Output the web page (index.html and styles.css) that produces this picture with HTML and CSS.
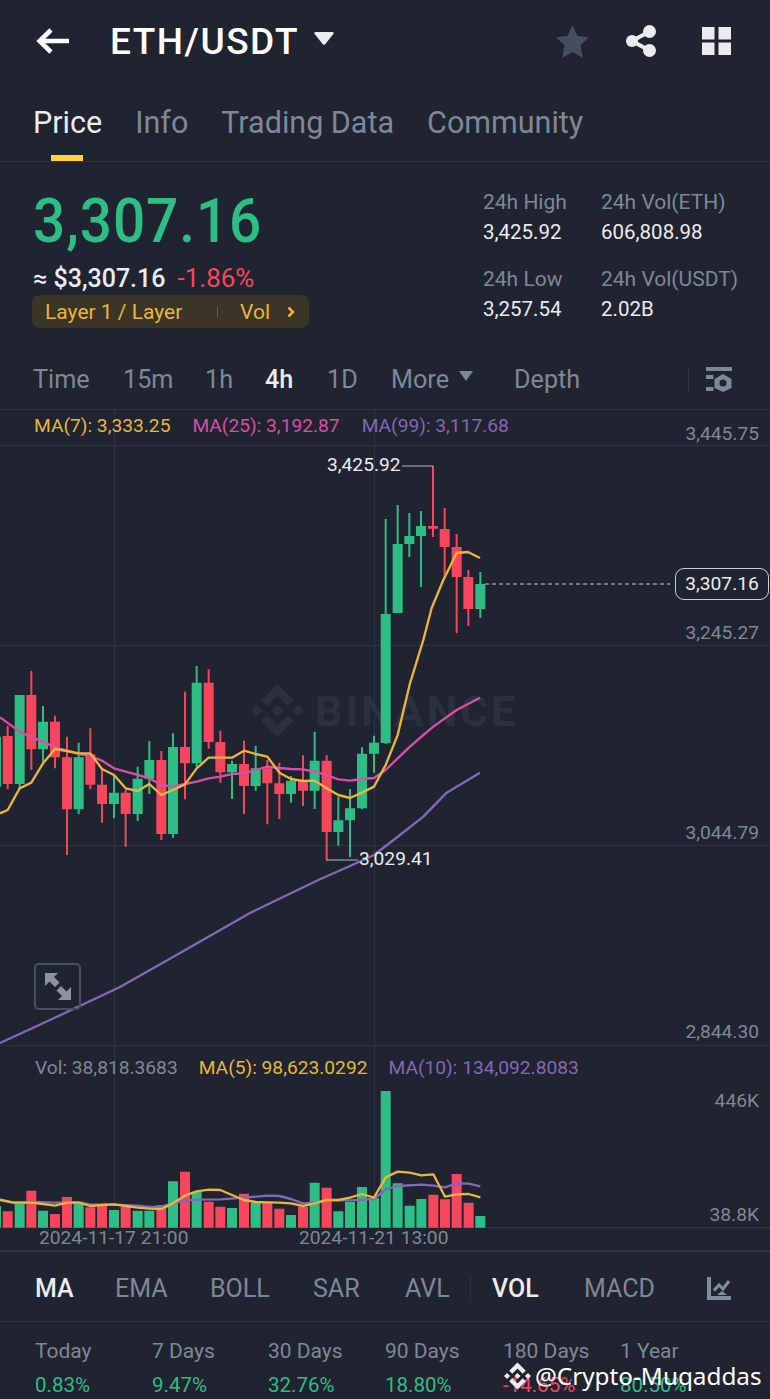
FILE: index.html
```html
<!DOCTYPE html>
<html lang="en">
  <head>
    <meta charset="UTF-8" />
    <meta name="viewport" content="width=device-width, initial-scale=1.0" />
    <title>ETH/USDT</title>
    <link rel="stylesheet" href="styles.css">
  </head>
  <body>
    <header class="top-bar">
      <svg class="back-icon" viewBox="0 0 34 26"><path d="M33 13H4M15 2 3.500 13 15 24"/></svg>
      <h1>ETH/USDT</h1>
      <svg class="caret-icon" viewBox="0 0 20 13"><path d="M1.500 0h17c1 0 1.500 1 1 1.800l-8.300 10.400c-.6.8-1.800.8-2.400 0L.5 1.800C0 1 .5 0 1.500 0z"/></svg>
      <div class="top-actions">
        <svg class="star-icon" viewBox="0 0 32 32"><path d="M16 0l4.800 10.600 11.200 1.200-8.300 7.800 2.300 12.400-10-5.900-10 5.900 2.300-12.400L0 11.800l11.200-1.200z"/></svg>
        <svg class="share-icon" viewBox="0 0 30 32"><circle cx="23.500" cy="6.500" r="6.500"/><circle cx="6" cy="16" r="6"/><circle cx="23.500" cy="25.500" r="6.500"/><path d="M23.500 6.500 6 16l17.500 9.500"/></svg>
        <svg class="grid-icon" viewBox="0 0 29 28"><path d="M0 0h12.500v12.500H0zM16.500 0H29v12.500H16.500zM0 15.500h12.500V28H0zM16.500 15.500H29V28H16.500z"/></svg>
      </div>
    </header>

    <nav class="tabs">
      <a class="tab active">Price</a>
      <a class="tab">Info</a>
      <a class="tab">Trading Data</a>
      <a class="tab">Community</a>
    </nav>

    <section class="stats">
      <div class="stats-main">
        <div class="last-price">3,307.16</div>
        <div class="fiat-line"><span class="fiat">≈ $3,307.16</span><span class="change">-1.86%</span></div>
        <div class="tag-pill">
          <span class="tag-name">Layer 1 / Layer</span>
          <i class="tag-sep"></i>
          <span>Vol</span>
          <svg class="tag-arrow" viewBox="0 0 8 12"><path d="M1.500 1.500 6 6l-4.500 4.500"/></svg>
        </div>
      </div>
      <dl class="stats-grid">
        <div><dt>24h High</dt><dd>3,425.92</dd></div>
        <div><dt>24h Vol(ETH)</dt><dd>606,808.98</dd></div>
        <div><dt>24h Low</dt><dd>3,257.54</dd></div>
        <div><dt>24h Vol(USDT)</dt><dd>2.02B</dd></div>
      </dl>
    </section>

    <nav class="intervals">
      <a class="interval w-time">Time</a>
      <a class="interval w-15m">15m</a>
      <a class="interval w-1h">1h</a>
      <a class="interval w-4h active">4h</a>
      <a class="interval w-1d">1D</a>
      <a class="interval w-more">More<svg class="more-caret" viewBox="0 0 14 10"><path d="M0 0h14L7 10z"/></svg></a>
      <a class="interval w-depth">Depth</a>
      <i class="interval-sep"></i>
      <svg class="settings-icon" viewBox="0 0 26 25"><path d="M0 0h26v4H0zM0 8h7.500v4H0zM0 20h7.500v4H0z"/><path fill-rule="evenodd" d="M17 7l8.500 5v9L17 25l-8.500-4v-9zM17 12.500a3.500 3.500 0 1 0 0 7 3.500 3.500 0 0 0 0-7z"/></svg>
    </nav>

    <section class="chart">
      <div class="watermark">
        <svg class="watermark-logo" viewBox="0 0 32 32"><path d="M9.800 13.400 16 7.200l6.200 6.200 3.600-3.600L16 0 6.200 9.800zM0 16l3.600-3.600L7.200 16l-3.600 3.600zM9.800 18.600 16 24.800l6.200-6.200 3.600 3.600L16 32l-9.800-9.800zM24.800 16l3.600-3.600L32 16l-3.600 3.600zM19.600 16 16 12.400 12.400 16 16 19.600z"/></svg>
        <span>BINANCE</span>
      </div>

      <svg class="chart-svg" viewBox="0 410 770 840">
        <path class="grid-line" d="M0 445.500H770M0 645.500H770M0 845.500H770M0 1045.500H770M0 1227.500H770M114.500 410V1228M374.500 410V1228"/>

        <!-- candles, drawn at 3x so the numbers stay whole -->
        <g transform="translate(0 640) scale(.33333)">
          <path class="wick up" d="M-12 260V480M59 165V445M129 198V365M236 308V522M342 405V535M413 380V543M448 303V462M519 280V593M590 78V380M696 362V477M767 317V452M873 408V488M944 275V507M1015 470V617M1050 447V652M1086 322V508M1122 287V398M1157 -363V312M1193 -405V-81M1228 -381V-249M1263 -387V-159M1441 -204V-66"/>
          <path class="wick down" d="M23 258V448M94 93V390M165 227V385M201 290V645M271 265V448M306 385V548M377 450V620M484 333V600M555 155V478M626 88V326M661 272V428M732 302V522M802 360V553M838 368V537M909 346V498M980 346V662M1299 -522V-309M1334 -396V-189M1370 -318V-21M1405 -210V-42"/>
          <path class="body up" d="M-12 290V440M59 165V432M129 245V328M236 352V508M342 458V492M413 416V522M448 360V416M519 321V582M590 128V370M696 372V397M767 385V438M873 422V462M944 362V452M1015 541V576M1050 505V541M1086 341V505M1122 308V341M1157 -78V309M1193 -288V-81M1228 -312V-288M1263 -342V-312M1441 -168V-93"/>
          <path class="body down" d="M23 288V432M94 165V328M165 245V352M201 352V508M271 343V434M306 434V492M377 458V522M484 360V582M555 321V370M626 128V306M661 306V397M732 372V438M802 385V430M838 430V462M909 422V452M980 362V576M1299 -342V-334M1334 -333V-279M1370 -279V-189M1405 -189V-93"/>
          <polyline class="ma ma-purple" points="0,1209 150,1140 360,1041 540,939 750,819 955,720 1050,678 1122,645 1200,585 1270,530 1340,458 1440,398"/>
          <polyline class="ma ma-pink" points="0,232 59,275 94,292 129,305 165,322 201,332 236,342 271,348 306,362 342,385 377,395 413,405 448,415 484,435 519,440 555,432 590,425 626,415 661,410 696,402 732,400 767,390 802,380 838,384 873,387 909,388 944,395 980,405 1015,418 1050,422 1086,417 1122,414 1157,390 1193,355 1230,320 1270,285 1300,260 1370,210 1440,173"/>
          <polyline class="ma ma-yellow" points="0,520 23,510 59,445 94,428 129,370 165,327 201,333 236,340 271,340 306,387 342,405 377,445 413,453 448,432 484,465 519,450 555,433 590,385 626,353 661,353 696,353 732,332 767,342 802,350 838,398 873,417 909,423 944,422 980,445 1015,465 1050,474 1086,458 1122,440 1157,375 1193,285 1230,130 1270,0 1295,-96 1330,-180 1370,-261 1404,-264 1440,-246"/>
        </g>

        <path class="leader" d="M402 466H433M327 860H358"/>
        <path class="last-line" d="M485 584H670"/>

        <!-- volume -->
        <g transform="translate(0 1050) scale(.33333)">
          <path class="body up" d="M-12 533V468M59 533V460M129 533V482M236 533V455M342 533V480M413 533V482M448 533V482M519 533V394M590 533V425M696 533V474M767 533V458M873 533V495M944 533V398M1015 533V484M1050 533V455M1086 533V411M1122 533V445M1157 533V123M1193 533V400M1229 533V467M1264 533V447M1441 533V498"/>
          <path class="body down" d="M23 533V484M94 533V422M165 533V492M201 533V441M271 533V472M306 533V468M377 533V470M484 533V465M555 533V365M626 533V455M661 533V470M732 533V431M802 533V455M838 533V476M909 533V470M980 533V413M1300 533V434M1335 533V448M1370 533V372M1406 533V458"/>
          <polyline class="ma ma-purple" points="0,448 40,458 94,456 165,458 236,457 271,463 342,464 413,467 448,471 484,470 519,460 555,452 590,449 661,448 732,443 802,437 838,438 873,447 909,460 944,458 980,451 1050,451 1122,447 1157,418 1193,408 1264,404 1300,407 1335,412 1370,400 1406,401 1441,409"/>
          <polyline class="ma ma-yellow" points="0,450 40,458 94,458 129,462 165,467 201,458 236,458 271,468 306,465 342,463 377,468 413,473 448,476 484,477 519,460 555,437 590,424 626,419 661,420 696,435 732,450 767,456 802,457 838,458 873,460 909,468 944,460 980,450 1015,450 1050,443 1086,432 1122,443 1157,382 1193,365 1229,368 1264,376 1300,373 1335,440 1370,433 1406,432 1441,442"/>
        </g>
      </svg>

      <div class="legend legend-price">
        <span class="c-yellow">MA(7): 3,333.25</span>
        <span class="c-pink">MA(25): 3,192.87</span>
        <span class="c-purple">MA(99): 3,117.68</span>
      </div>
      <div class="legend legend-vol">
        <span class="c-grey">Vol: 38,818.3683</span>
        <span class="c-yellow">MA(5): 98,623.0292</span>
        <span class="c-purple">MA(10): 134,092.8083</span>
      </div>

      <span class="axis-label y-1">3,445.75</span>
      <span class="axis-label y-2">3,245.27</span>
      <span class="axis-label y-3">3,044.79</span>
      <span class="axis-label y-4">2,844.30</span>
      <span class="axis-label y-5">446K</span>
      <span class="axis-label y-6">38.8K</span>

      <span class="peak-label high">3,425.92</span>
      <span class="peak-label low">3,029.41</span>
      <span class="price-tag">3,307.16</span>

      <span class="date-label d-1">2024-11-17 21:00</span>
      <span class="date-label d-2">2024-11-21 13:00</span>

      <button class="expand-btn">
        <svg viewBox="0 0 26 27"><path d="M0 0h13L9 4l5.500 5.500-4.500 4.500L4.500 8.500 0 13zM26 27H13l4-4-5.500-5.500 4.500-4.500 5.500 5.500 4.500-4.500z"/></svg>
      </button>
    </section>

    <nav class="indicators">
      <a class="ind w-ma active">MA</a>
      <a class="ind w-ema">EMA</a>
      <a class="ind w-boll">BOLL</a>
      <a class="ind w-sar">SAR</a>
      <a class="ind w-avl">AVL</a>
      <i class="ind-sep"></i>
      <a class="ind w-vol active">VOL</a>
      <a class="ind w-macd">MACD</a>
      <svg class="ind-icon" viewBox="0 0 24 23"><path d="M0 0h4v19h20v4H0z"/><path d="M7 13.500 12 8l4 4 6-8" class="ind-line"/><path d="M10 18l5-4 5 4z"/></svg>
    </nav>

    <section class="perf">
      <div><span>Today</span><b class="pos">0.83%</b></div>
      <div><span>7 Days</span><b class="pos">9.47%</b></div>
      <div><span>30 Days</span><b class="pos">32.76%</b></div>
      <div><span>90 Days</span><b class="pos">18.80%</b></div>
      <div><span>180 Days</span><b class="neg">-14.65%</b></div>
      <div><span>1 Year</span><b class="pos">80.50%</b></div>
    </section>

    <div class="credit">
      <svg class="credit-logo" viewBox="0 0 32 32"><path d="M9.800 13.400 16 7.200l6.200 6.200 3.600-3.600L16 0 6.200 9.800zM0 16l3.600-3.600L7.200 16l-3.600 3.600zM9.800 18.600 16 24.800l6.200-6.200 3.600 3.600L16 32l-9.800-9.800zM24.800 16l3.600-3.600L32 16l-3.600 3.600zM19.600 16 16 12.400 12.400 16 16 19.600z"/></svg>
      <span>@Crypto-Muqaddas</span>
    </div>
  </body>
</html>
```

FILE: styles.css
```css
* {
  margin: 0;
  padding: 0;
  box-sizing: border-box;
}

:root {
  --bg: #1f2430;
  --line: #2e333e;
  --grey: #7f8796;
  --white: #eaecef;
  --green: #2ebd85;
  --red: #f6465d;
  --yellow: #e9b63b;
  --pink: #d94fa8;
  --purple: #8467b8;
}

body {
  position: relative;
  width: 770px;
  height: 1399px;
  overflow: hidden;
  background-color: var(--bg);
  color: var(--white);
  font-family: Roboto, sans-serif;
}

a {
  display: block;
}

/* Top bar */
.top-bar {
  display: flex;
  align-items: center;
  height: 82px;
  padding-left: 36px;
}

.back-icon {
  width: 34px;
  height: 26px;
  fill: none;
  stroke: #fff;
  stroke-width: 4.5;
}

h1 {
  margin-left: 40px;
  font-size: 37px;
  font-weight: 500;
  letter-spacing: 1.5px;
  color: #fff;
}

.caret-icon {
  width: 20px;
  height: 13px;
  margin-left: 15px;
  margin-top: -6px;
  fill: var(--white);
}

.top-actions {
  display: flex;
  align-items: center;
  margin-left: auto;
  padding-right: 39px;
}

.star-icon {
  width: 33px;
  height: 33px;
  fill: #454e5f;
}

.share-icon {
  width: 30px;
  height: 32px;
  margin-left: 37px;
  fill: var(--white);
  stroke: var(--white);
}

.share-icon circle {
  stroke: none;
}

.share-icon path {
  fill: none;
  stroke-width: 4;
}

.grid-icon {
  width: 29px;
  height: 28px;
  margin-left: 46px;
  fill: var(--white);
}

/* Tabs */
.tabs {
  position: relative;
  display: flex;
  gap: 33px;
  height: 80px;
  padding: 20px 0 0 33px;
  border-bottom: 1px solid var(--line);
}

.tab {
  position: relative;
  height: 59px;
  font-size: 30.5px;
  line-height: 41px;
  color: var(--grey);
}

.tab.active {
  color: var(--white);
}

.tab.active::after {
  content: "";
  position: absolute;
  left: 18px;
  bottom: 0;
  width: 32px;
  height: 6px;
  background-color: #fcd535;
}

/* Price block */
.stats {
  display: flex;
  justify-content: space-between;
  height: 187px;
  padding: 24px 0 0 33px;
}

.last-price {
  height: 70px;
  font-size: 62px;
  line-height: 70px;
  font-weight: 500;
  letter-spacing: 1px;
  color: var(--green);
  transform: scaleX(.915);
  transform-origin: left;
}

.fiat-line {
  display: flex;
  align-items: baseline;
  gap: 12px;
  margin-top: 7px;
  font-size: 25px;
  line-height: 30px;
}

.fiat {
  font-weight: 500;
}

.change {
  font-size: 26px;
  color: var(--red);
}

.tag-pill {
  display: flex;
  align-items: center;
  width: 277px;
  height: 33px;
  margin: 1px 0 0 -1px;
  padding-left: 13px;
  border-radius: 8px;
  background-color: #3a3527;
  font-size: 21px;
  color: var(--yellow);
}

.tag-name {
  width: 172px;
}

.tag-sep {
  width: 1px;
  height: 10px;
  background-color: #6b5f33;
  margin-right: 22px;
}

.tag-arrow {
  width: 8px;
  height: 12px;
  margin-left: 17px;
  fill: none;
  stroke: var(--yellow);
  stroke-width: 2.5;
}

.stats-grid {
  display: grid;
  grid-template-columns: 118px 169px;
  grid-auto-rows: 77px;
  padding-top: 1px;
}

.stats-grid dt {
  font-size: 21px;
  line-height: 30px;
  color: var(--grey);
}

.stats-grid dd {
  font-size: 20.5px;
  line-height: 30px;
  color: var(--white);
}

/* Interval row */
.intervals,
.indicators {
  position: relative;
  display: flex;
  align-items: center;
}

.intervals {
  height: 61px;
  padding-left: 33px;
  border-bottom: 1px solid var(--line);
}

.interval {
  font-size: 25.2px;
  color: var(--grey);
}

.interval.active {
  font-weight: 500;
  color: var(--white);
}

.w-time { width: 90px; }
.w-15m { width: 82px; }
.w-1h { width: 60px; }
.w-4h { width: 62px; }
.w-1d { width: 64px; }
.w-more { width: 123px; display: flex; align-items: center; }
.w-depth { width: 174px; }

.more-caret {
  width: 14px;
  height: 10px;
  margin: -6px 0 0 10px;
  fill: var(--grey);
}

.interval-sep {
  width: 1px;
  height: 25px;
  background-color: var(--line);
}

.settings-icon {
  width: 26px;
  height: 25px;
  margin-left: 17px;
  fill: var(--grey);
}

/* Chart */
.chart {
  position: relative;
  height: 842px;
  border-bottom: 2px solid var(--line);
}

.chart-svg {
  position: relative;
  display: block;
  width: 770px;
  height: 840px;
}

.grid-line {
  fill: none;
  stroke: var(--line);
  stroke-width: 1;
}

.wick,
.body,
.ma {
  fill: none;
}

.wick {
  stroke-width: 6;
}

.body {
  stroke-width: 30;
}

.up {
  stroke: var(--green);
}

.down {
  stroke: var(--red);
}

.ma {
  stroke-width: 7;
  stroke-linejoin: round;
}

.ma-yellow {
  stroke: var(--yellow);
}

.ma-pink {
  stroke: var(--pink);
}

.ma-purple {
  stroke: var(--purple);
}

.leader {
  fill: none;
  stroke: #b4b9c2;
  stroke-width: 1;
}

.last-line {
  fill: none;
  stroke: #c9cdd4;
  stroke-width: 1;
  stroke-dasharray: 4 3;
}

.watermark {
  position: absolute;
  left: 251px;
  top: 274px;
  display: flex;
  align-items: center;
  gap: 11px;
  color: #2b303b;
  font-size: 43px;
  font-weight: 700;
  letter-spacing: 3px;
}

.watermark-logo {
  width: 53px;
  height: 53px;
  fill: #2b303b;
}

.legend {
  position: absolute;
  display: flex;
  font-size: 19.2px;
  line-height: 24px;
}

.legend-price {
  left: 34px;
  top: 4px;
  gap: 22px;
}

.legend-vol {
  left: 35px;
  top: 646px;
  gap: 21px;
}

.c-yellow { color: var(--yellow); }
.c-pink { color: var(--pink); }
.c-purple { color: var(--purple); }
.c-grey { color: var(--grey); }

.axis-label {
  position: absolute;
  right: 11px;
  font-size: 19.2px;
  line-height: 24px;
  color: var(--grey);
}

.y-1 { top: 12px; }
.y-2 { top: 211px; }
.y-3 { top: 411px; }
.y-4 { top: 610px; }
.y-5 { top: 679px; }
.y-6 { top: 793px; }

.peak-label {
  position: absolute;
  font-size: 19.2px;
  line-height: 24px;
  color: var(--white);
}

.high {
  left: 327px;
  top: 43px;
}

.low {
  left: 359px;
  top: 437px;
}

.price-tag {
  position: absolute;
  left: 675px;
  top: 158px;
  width: 94px;
  height: 32px;
  border: 1px solid #c9cdd4;
  border-radius: 9px;
  background-color: var(--bg);
  font-size: 19.2px;
  line-height: 30px;
  text-align: center;
  color: var(--white);
}

.date-label {
  position: absolute;
  top: 816px;
  font-size: 19.2px;
  line-height: 24px;
  color: var(--grey);
}

.d-1 { left: 39px; }
.d-2 { left: 299px; }

.expand-btn {
  position: absolute;
  left: 34px;
  top: 553px;
  width: 47px;
  height: 47px;
  border: 2px solid #484f5c;
  border-radius: 5px;
  background: none;
  display: flex;
  align-items: center;
  justify-content: center;
}

.expand-btn svg {
  width: 26px;
  height: 27px;
  fill: #8b93a1;
}

/* Indicator row */
.indicators {
  height: 70px;
  padding: 3px 0 0 35px;
  border-bottom: 1px solid var(--line);
}

.ind {
  font-size: 25px;
  color: var(--grey);
}

.ind.active {
  font-weight: 500;
  color: var(--white);
}

.w-ma { width: 80px; }
.w-ema { width: 95px; }
.w-boll { width: 103px; }
.w-sar { width: 92px; }
.w-avl { width: 65px; }
.w-vol { width: 92px; }
.w-macd { width: 123px; }

.ind-sep {
  width: 1px;
  height: 25px;
  background-color: var(--line);
  margin-right: 21px;
}

.ind-icon {
  width: 24px;
  height: 23px;
  fill: #848c9b;
}

.ind-line {
  fill: none;
  stroke: #848c9b;
  stroke-width: 3;
}

/* Performance row */
.perf {
  display: grid;
  grid-template-columns: 117px 116px 117px 118px 117px auto;
  padding: 15px 0 0 35px;
}

.perf span {
  display: block;
  font-size: 21px;
  line-height: 28px;
  color: var(--grey);
}

.perf b {
  display: block;
  margin-top: 7px;
  font-size: 20.5px;
  line-height: 26px;
  font-weight: 400;
}

.pos {
  color: var(--green);
}

.neg {
  color: var(--red);
}

/* Repost credit laid over the bottom row */
.credit {
  position: absolute;
  left: 504px;
  top: 1360px;
  display: flex;
  align-items: center;
  gap: 4px;
  font-family: "Noto Sans", sans-serif;
  font-size: 24.3px;
  line-height: 32px;
  color: #fff;
}

.credit-logo {
  width: 27px;
  height: 30px;
  fill: #eaecef;
}
```
